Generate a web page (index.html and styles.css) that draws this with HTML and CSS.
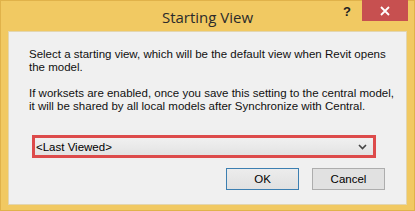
FILE: index.html
```html
<!DOCTYPE html>
<html lang="en">
<head>
  <title>Starting View</title>
  <link rel="stylesheet" href="styles.css">
</head>
<body>

  <div class="window">
    <div class="titlebar">
      <div class="title">Starting View</div>
      <div class="controls">
        <span class="help">?</span>
        <span class="close">
          <svg width="10" height="10" viewBox="0 0 10 10">
            <path d="M1 1 L9 9 M9 1 L1 9" stroke="#fff" stroke-width="1.8"/>
          </svg>
        </span>
      </div>
    </div>

    <div class="client">
      <div class="message">
        <p>Select a starting view, which will be the default view when Revit opens<br>the model.</p>
        <p>If worksets are enabled, once you save this setting to the central model,<br>it will be shared by all local models after Synchronize with Central.</p>
      </div>

      <div class="combo">
        <span class="combo-text">&lt;Last Viewed&gt;</span>
        <svg class="chevron" width="9" height="6" viewBox="0 0 9 6">
          <path d="M1 1 L4.5 4.5 L8 1" stroke="#444" stroke-width="1.6" fill="none"/>
        </svg>
      </div>

      <div class="buttons">
        <div class="button default">OK</div>
        <div class="button">Cancel</div>
      </div>
    </div>
  </div>

</body>
</html>
```

FILE: styles.css
```css
body {
  margin: 0;
  font-family: "Liberation Sans", Arial, sans-serif;
}

.window {
  width: 415px;
  height: 211px;
  box-sizing: border-box;
  background-color: #f1c962;
  border: 1px solid #e0b24a;
  display: flex;
  flex-direction: column;
}

.titlebar {
  position: relative;
  height: 30px;
  display: flex;
  align-items: center;
}

.title {
  flex: 1;
  text-align: center;
  font-family: "Open Sans", sans-serif;
  font-size: 15px;
  color: #2b2b2b;
  padding-top: 2px;
}

.controls {
  position: absolute;
  top: -1px;
  right: 6px;
  display: flex;
  align-items: flex-start;
}

.help {
  font-family: "Liberation Sans", Arial, sans-serif;
  font-weight: bold;
  font-size: 13px;
  color: #222;
  margin-top: 4px;
  margin-right: 11px;
}

.close {
  width: 46px;
  height: 21px;
  background-color: #c75050;
  display: flex;
  justify-content: center;
  align-items: center;
}

.client {
  margin: 0 7px;
  height: 172px;
  background-color: #f0f0f0;
  border: 1px solid #e3d6b0;
  display: flex;
  flex-direction: column;
}

.message {
  padding: 16px 0 0 20px;
  font-size: 11.5px;
  line-height: 13px;
  color: #111;
}

.message p {
  margin: 0 0 13px;
}

.combo {
  margin: 9px 0 0 23px;
  width: 344px;
  height: 23px;
  box-sizing: border-box;
  border: 3px solid #dd4b4b;
  background: linear-gradient(#f0f0f0, #e3e3e3);
  display: flex;
  align-items: center;
  justify-content: space-between;
  padding: 0 6px 0 1px;
  font-size: 11.5px;
  color: #000;
}

.buttons {
  display: flex;
  justify-content: flex-end;
  gap: 13px;
  margin: 10px 21px 0 0;
}

.button {
  width: 73px;
  height: 22px;
  box-sizing: border-box;
  border: 1px solid #adadad;
  background-color: #e1e1e1;
  display: flex;
  justify-content: center;
  align-items: center;
  font-size: 11.5px;
  color: #000;
}

.button.default {
  border-color: #3c7fb1;
  background: linear-gradient(#ececec, #e1e1e1);
}
```
